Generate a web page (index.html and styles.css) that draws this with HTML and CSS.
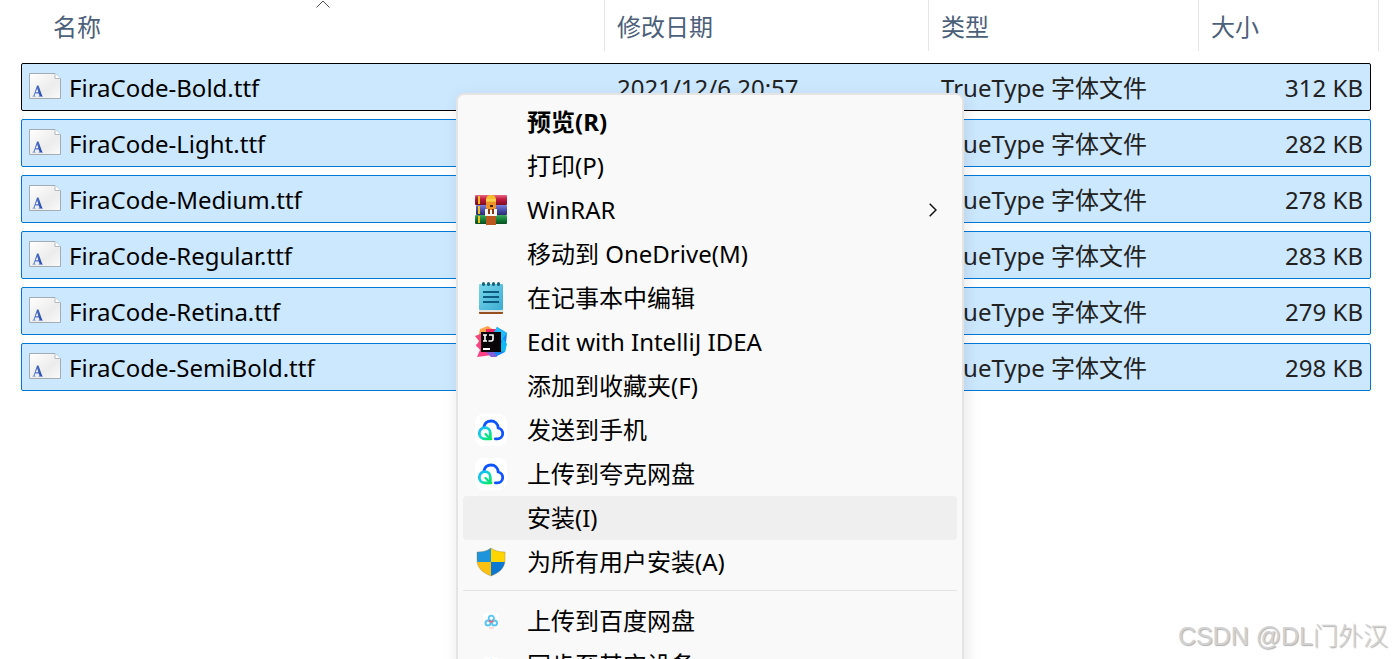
FILE: index.html
```html
<!DOCTYPE html>
<html lang="zh-CN">
<head>
    <meta charset="UTF-8">
    <meta name="viewport" content="width=device-width, initial-scale=1.0">
    <title>FiraCode</title>
    <link rel="stylesheet" href="styles.css">
</head>
<body>
    <!-- Shared icons -->
    <svg class="icon-defs" aria-hidden="true">
        <defs>
            <linearGradient id="paper" x1="0" y1="0" x2="1" y2="1">
                <stop offset="0" stop-color="#ffffff"/>
                <stop offset="0.6" stop-color="#ececec"/>
                <stop offset="1" stop-color="#fafafa"/>
            </linearGradient>
            <linearGradient id="letter" x1="0" y1="0" x2="1" y2="0">
                <stop offset="0" stop-color="#6f97e0"/>
                <stop offset="1" stop-color="#1a3da8"/>
            </linearGradient>
            <linearGradient id="cloudGreen" x1="0" y1="0" x2="1" y2="1">
                <stop offset="0" stop-color="#12b4ff"/>
                <stop offset="0.5" stop-color="#10d8d0"/>
                <stop offset="1" stop-color="#08e94e"/>
            </linearGradient>
            <symbol id="icon-ttf" viewBox="0 0 32 26">
                <path d="M0.5 0.5H26L31.5 6V25.5H0.5Z" fill="url(#paper)" stroke="#a3abb3"/>
                <path d="M26 0.5V5.5H31.5" fill="#ffffff" stroke="#b4bac0"/>
                <path d="M3 23.5L4.5 22.5L8 12.5H9.5L13 22.5L14 23.5H9.5L10.5 22.5L9.8 20.5H6.3L5.6 22.5L7 23.5ZM6.7 19.3H9.4L8.2 15.5Z" fill="url(#letter)"/>
            </symbol>
            <symbol id="icon-cloud" viewBox="0 0 32 32">
                <rect width="32" height="32" rx="8" fill="#ffffff"/>
                <path d="M9 12.5C9.8 9.2 12.5 7 16 7C20 7 23 10 23.2 14C26 14.7 27.7 16.8 27.7 19.5C27.7 22.600 25.400 24.800 22.400 24.800H20.300" fill="none" stroke="#0d53ff" stroke-width="2.800" stroke-linecap="round"/>
                <path d="M16 24.800H10C6.800 24.800 4.300 22.400 4.300 19.200C4.300 16 6.800 13.700 10 13.700C13 13.700 15.300 16 15.300 19V24" fill="none" stroke="url(#cloudGreen)" stroke-width="2.800" stroke-linecap="round"/>
                <path d="M10.500 20L14.500 24" fill="none" stroke="#10e08c" stroke-width="2.400" stroke-linecap="round"/>
            </symbol>
            <symbol id="icon-baidu" viewBox="0 0 32 32">
                <rect x="8" y="8" width="16" height="16" rx="4" fill="#ffffff"/>
                <path d="M13.500 15L16.300 16.500L19 15" fill="none" stroke="#ee6678" stroke-width="2.200"/>
                <circle cx="16.300" cy="13.300" r="2.600" fill="none" stroke="#58c6f4" stroke-width="1.800"/>
                <circle cx="13" cy="18" r="2.500" fill="none" stroke="#58c6f4" stroke-width="2"/>
                <circle cx="19.500" cy="18" r="2.500" fill="none" stroke="#58c6f4" stroke-width="2"/>
                <path d="M14 15.500L16.300 17L18.500 15.500" fill="none" stroke="#ee6678" stroke-width="1.500"/>
                <path d="M14 23H19" stroke="#f6b6bd"/>
            </symbol>
        </defs>
    </svg>

    <main class="explorer">
        <table class="file-table">
            <thead>
                <tr>
                    <th scope="col" aria-sort="ascending">
                        名称
                        <svg class="sort-arrow" viewBox="0 0 14 8" aria-hidden="true"><path d="M0.5 7.5L7 1L13.5 7.5" fill="none" stroke="#555555"/></svg>
                    </th>
                    <th scope="col">修改日期</th>
                    <th scope="col">类型</th>
                    <th scope="col">大小</th>
                </tr>
            </thead>
            <tbody>
                <tr class="focused">
                    <td class="name"><svg class="file-icon" aria-hidden="true"><use href="#icon-ttf"/></svg>FiraCode-Bold.ttf</td>
                    <td>2021/12/6 20:57</td>
                    <td>TrueType 字体文件</td>
                    <td class="size">312 KB</td>
                </tr>
                <tr>
                    <td class="name"><svg class="file-icon" aria-hidden="true"><use href="#icon-ttf"/></svg>FiraCode-Light.ttf</td>
                    <td></td>
                    <td>TrueType 字体文件</td>
                    <td class="size">282 KB</td>
                </tr>
                <tr>
                    <td class="name"><svg class="file-icon" aria-hidden="true"><use href="#icon-ttf"/></svg>FiraCode-Medium.ttf</td>
                    <td></td>
                    <td>TrueType 字体文件</td>
                    <td class="size">278 KB</td>
                </tr>
                <tr>
                    <td class="name"><svg class="file-icon" aria-hidden="true"><use href="#icon-ttf"/></svg>FiraCode-Regular.ttf</td>
                    <td></td>
                    <td>TrueType 字体文件</td>
                    <td class="size">283 KB</td>
                </tr>
                <tr>
                    <td class="name"><svg class="file-icon" aria-hidden="true"><use href="#icon-ttf"/></svg>FiraCode-Retina.ttf</td>
                    <td></td>
                    <td>TrueType 字体文件</td>
                    <td class="size">279 KB</td>
                </tr>
                <tr>
                    <td class="name"><svg class="file-icon" aria-hidden="true"><use href="#icon-ttf"/></svg>FiraCode-SemiBold.ttf</td>
                    <td></td>
                    <td>TrueType 字体文件</td>
                    <td class="size">298 KB</td>
                </tr>
            </tbody>
        </table>

        <!-- Right-click menu -->
        <div class="context-menu" role="menu">
            <button class="menu-item default" role="menuitem"><span class="menu-icon"></span>预览(R)</button>
            <button class="menu-item" role="menuitem"><span class="menu-icon"></span>打印(P)</button>
            <button class="menu-item" role="menuitem" aria-haspopup="true">
                <svg class="menu-icon" viewBox="0 0 32 32" aria-hidden="true">
                    <defs>
                        <linearGradient id="bookRed" x1="0" y1="0" x2="0" y2="1"><stop offset="0" stop-color="#e66a86"/><stop offset="0.4" stop-color="#c41c40"/><stop offset="1" stop-color="#7d0c22"/></linearGradient>
                        <linearGradient id="bookBlue" x1="0" y1="0" x2="0" y2="1"><stop offset="0" stop-color="#7b80d8"/><stop offset="0.5" stop-color="#4a4eae"/><stop offset="1" stop-color="#292b70"/></linearGradient>
                        <linearGradient id="bookGreen" x1="0" y1="0" x2="0" y2="1"><stop offset="0" stop-color="#43a861"/><stop offset="0.5" stop-color="#148038"/><stop offset="1" stop-color="#064d20"/></linearGradient>
                    </defs>
                    <rect y="1" width="32" height="10" rx="1" fill="url(#bookRed)"/>
                    <rect x="1" y="11" width="31" height="10" rx="1" fill="url(#bookBlue)"/>
                    <rect y="21" width="32" height="9" rx="1" fill="url(#bookGreen)"/>
                    <path d="M4 2V10M4 12V20M4 22V29" stroke="#f2c01e" stroke-width="2"/>
                    <path d="M2 2V10M2 12V20M2 22V29" stroke="#000000" stroke-opacity="0.25"/>
                    <rect x="11" y="20" width="10" height="11" fill="#b9581f"/>
                    <path d="M11 6Q11 1 16 1Q21 1 21 6V8H11Z" fill="#f5bd2c"/>
                    <path d="M11 6H21" stroke="#fbe07a"/>
                    <path d="M11 8H21V14L19 16H13L11 14Z" fill="#ec932f"/>
                    <path d="M15 11H18V13H15Z" fill="#4a2108"/>
                    <path d="M10 15H13V20H15V16H17V20H19V15H22V22H10Z" fill="#f7f4f2"/>
                    <path d="M13 15H15V20H13ZM17 15H19V20H17Z" fill="#813813"/>
                </svg>
                WinRAR
                <svg class="submenu-arrow" viewBox="0 0 8 14" aria-hidden="true"><path d="M0.7 0.7L7 7L0.7 13.3" fill="none" stroke="#111111" stroke-width="1.5"/></svg>
            </button>
            <button class="menu-item" role="menuitem"><span class="menu-icon"></span>移动到 OneDrive(M)</button>
            <button class="menu-item" role="menuitem">
                <svg class="menu-icon" viewBox="0 0 32 32" aria-hidden="true">
                    <defs>
                        <linearGradient id="note" x1="0" y1="0" x2="1" y2="1"><stop offset="0" stop-color="#79d7ec"/><stop offset="1" stop-color="#3bacd2"/></linearGradient>
                    </defs>
                    <rect x="4" y="28" width="24" height="4" rx="1" fill="#965020"/>
                    <rect x="4" y="27" width="24" height="3" fill="#e6e4e1"/>
                    <rect x="4" y="2" width="24" height="26" rx="1" fill="url(#note)"/>
                    <path d="M8 10H24M8 15H24M8 20H24" stroke="#0c5b80" stroke-width="2"/>
                    <path d="M8.5 1.5V2.5M13.5 1.5V2.5M18.5 1.5V2.5M23.5 1.5V2.5" stroke="#17627f" stroke-width="3" stroke-linecap="round"/>
                </svg>
                在记事本中编辑
            </button>
            <button class="menu-item" role="menuitem">
                <svg class="menu-icon" viewBox="0 0 32 32" aria-hidden="true">
                    <path d="M5 3L13 0L20 5L12 16L3 13Z" fill="#fca54b"/>
                    <path d="M0 10L8 7L14 16L8 25L1 20L4 15Z" fill="#f5457a"/>
                    <path d="M1 18L12 21L17 29L2 31L5 24Z" fill="#ff3f86"/>
                    <path d="M11 3L21 3L18 16L11 12Z" fill="#f62665"/>
                    <path d="M22 1L32 7L30 26L20 31L14 25L18 8Z" fill="#1686f2"/>
                    <path d="M22 1L32 7L26 15L18 8Z" fill="#20bafc"/>
                    <path d="M28 12L32 18L30 26L24 25Z" fill="#10b9f4"/>
                    <path d="M10 25L18 24L22 31L16 31Z" fill="#8461d8"/>
                    <rect x="6" y="6" width="20" height="20" fill="#080408"/>
                    <path d="M8 9H12M10 9V15M8 15H12M14 9H18V13Q18 15 16 15H13.5" fill="none" stroke="#ffffff" stroke-width="1.6"/>
                    <path d="M8 23H15" stroke="#ffffff" stroke-width="2"/>
                </svg>
                Edit with IntelliJ IDEA
            </button>
            <button class="menu-item" role="menuitem"><span class="menu-icon"></span>添加到收藏夹(F)</button>
            <button class="menu-item" role="menuitem"><svg class="menu-icon" aria-hidden="true"><use href="#icon-cloud"/></svg>发送到手机</button>
            <button class="menu-item" role="menuitem"><svg class="menu-icon" aria-hidden="true"><use href="#icon-cloud"/></svg>上传到夸克网盘</button>
            <button class="menu-item active" role="menuitem"><span class="menu-icon"></span>安装(I)</button>
            <button class="menu-item" role="menuitem">
                <svg class="menu-icon" viewBox="0 0 32 32" aria-hidden="true">
                    <defs>
                        <clipPath id="shield"><path d="M16 2C12 5 7 6 2 6V14C2 22 8 27 16 30C24 27 30 22 30 14V6C25 6 20 5 16 2Z"/></clipPath>
                    </defs>
                    <g clip-path="url(#shield)">
                        <rect width="16" height="16" fill="#1e94dc"/>
                        <rect x="16" width="16" height="16" fill="#ffd500"/>
                        <rect y="16" width="16" height="16" fill="#fcc010"/>
                        <rect x="16" y="16" width="16" height="16" fill="#0c78d2"/>
                    </g>
                    <path d="M16 2C12 5 7 6 2 6V14C2 22 8 27 16 30C24 27 30 22 30 14V6C25 6 20 5 16 2Z" fill="none" stroke="#8a7530" stroke-opacity="0.35"/>
                </svg>
                为所有用户安装(A)
            </button>
            <hr class="menu-separator">
            <button class="menu-item" role="menuitem"><svg class="menu-icon" aria-hidden="true"><use href="#icon-baidu"/></svg>上传到百度网盘</button>
            <button class="menu-item" role="menuitem"><svg class="menu-icon" aria-hidden="true"><use href="#icon-baidu"/></svg>同步至其它设备</button>
        </div>

        <div class="watermark">CSDN @DL门外汉</div>
    </main>
</body>
</html>
```
FILE: styles.css
```css
/* General styling */
* {
    box-sizing: border-box;
}

body {
    margin: 0;
    background-color: #fff;
    font-family: "Noto Sans", "Noto Sans CJK SC", sans-serif;
    font-size: 24px;
    line-height: 32px;
    color: #000;
}

.icon-defs {
    position: absolute;
    width: 0;
    height: 0;
}

.explorer {
    position: relative;
    height: 100vh;
    overflow: hidden;
}

/* File list */
.file-table {
    display: block;
    padding: 0 13px 0 21px;
}

.file-table thead,
.file-table tbody {
    display: block;
}

.file-table tr {
    display: grid;
    grid-template-columns: 1fr 324px 270px 180px;
}

.file-table thead tr {
    height: 51px;
    margin: 0 0 12px 20px;
}

.file-table th {
    position: relative;
    padding: 11px 12px 0;
    border-right: 1px solid #e5e5e5;
    color: #4c607a;
    font-weight: normal;
    text-align: left;
}

.sort-arrow {
    position: absolute;
    top: 0;
    left: 50%;
    width: 14px;
    height: 8px;
    margin-left: -7px;
}

.file-table tbody tr {
    grid-template-columns: 1fr 324px 270px 171px;
    align-items: center;
    height: 48px;
    margin: 0 8px 8px 0;
    background-color: #cce8ff;
    border: 1px solid #0078d7;
    border-radius: 2px;
}

.file-table tbody tr.focused {
    border-color: #000;
}

.file-table td {
    padding: 1px 12px 0;
    color: #222;
    white-space: nowrap;
}

.file-table td.name {
    display: flex;
    align-items: center;
    gap: 8px;
    padding-left: 7px;
    color: #000;
}

.file-table td.size {
    padding-right: 7px;
    text-align: right;
}

.file-icon {
    width: 32px;
    height: 26px;
    margin-bottom: 4px;
}

/* Context menu */
.context-menu {
    position: absolute;
    top: 93px;
    left: 456px;
    width: 508px;
    padding: 5px;
    background-color: #f9f9f9;
    border: 2px solid #e4e4e4;
    border-radius: 8px;
    box-shadow: 2px 4px 16px rgba(0, 0, 0, 0.1);
}

.menu-item {
    display: flex;
    align-items: center;
    gap: 20px;
    width: 100%;
    height: 44px;
    padding: 0 20px 0 12px;
    background-color: transparent;
    border: none;
    border-radius: 4px;
    color: #000;
    font: inherit;
    text-align: left;
}

.menu-item.default {
    font-weight: bold;
}

.menu-item.active,
.menu-item:hover {
    background-color: #efefef;
}

.menu-icon {
    flex: none;
    width: 32px;
    height: 32px;
}

.submenu-arrow {
    width: 8px;
    height: 14px;
    margin-left: auto;
}

.menu-separator {
    height: 1px;
    margin: 6px 0 8px;
    background-color: #e2e2e2;
    border: none;
}

.watermark {
    position: absolute;
    right: 4px;
    bottom: 7px;
    color: #d2d2d2;
    font-family: "Liberation Sans", "Noto Sans CJK SC", sans-serif;
    font-size: 25px;
    font-weight: 300;
    text-shadow: 1px 1px 1px #b0b0b0;
}
```
